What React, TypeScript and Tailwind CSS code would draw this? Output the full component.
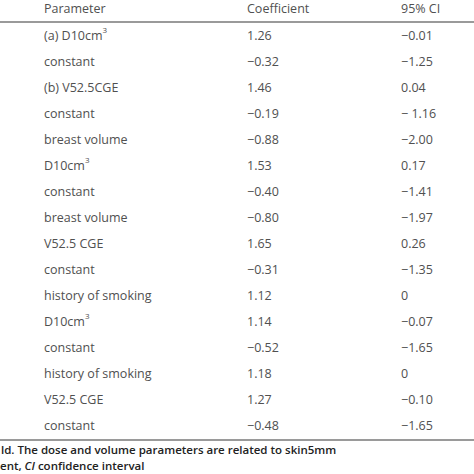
const Sup = () => <sup className="text-[8px] align-super relative -top-[1px]">3</sup>;

const rows: [React.ReactNode, string, string][] = [
  [<>(a) D10cm<Sup /></>, "1.26", "−0.01"],
  ["constant", "−0.32", "−1.25"],
  ["(b) V52.5CGE", "1.46", "0.04"],
  ["constant", "−0.19", "− 1.16"],
  ["breast volume", "−0.88", "−2.00"],
  [<>D10cm<Sup /></>, "1.53", "0.17"],
  ["constant", "−0.40", "−1.41"],
  ["breast volume", "−0.80", "−1.97"],
  ["V52.5 CGE", "1.65", "0.26"],
  ["constant", "−0.31", "−1.35"],
  ["history of smoking", "1.12", "0"],
  [<>D10cm<Sup /></>, "1.14", "−0.07"],
  ["constant", "−0.52", "−1.65"],
  ["history of smoking", "1.18", "0"],
  ["V52.5 CGE", "1.27", "−0.10"],
  ["constant", "−0.48", "−1.65"],
];

export default function App() {
  return (
    <div className="w-[474px] h-[474px] overflow-hidden bg-white font-['Open_Sans',sans-serif]">
      <div className="text-[12.5px] text-[#505050]">
        <div className="flex h-[23px] leading-[18px] border-b-2 border-[#9a9a9a]">
          <div className="w-[247px] pl-[44px]">Parameter</div>
          <div className="w-[154px]">Coefficient</div>
          <div>95% CI</div>
        </div>
        <div className="border-b-2 border-[#9a9a9a]">
          {rows.map((r, i) => (
            <div key={i} className="flex h-[26px] items-center">
              <div className="w-[247px] pl-[44px]">{r[0]}</div>
              <div className="w-[154px]">{r[1]}</div>
              <div>{r[2]}</div>
            </div>
          ))}
        </div>
      </div>
      <div className="pt-[1px] text-[11.5px] leading-[16px] text-[#222] font-semibold whitespace-nowrap">
        <div className="ml-[1px]">ld. The dose and volume parameters are related to skin5mm</div>
        <div>ent, <i>CI</i> confidence interval</div>
      </div>
    </div>
  );
}
